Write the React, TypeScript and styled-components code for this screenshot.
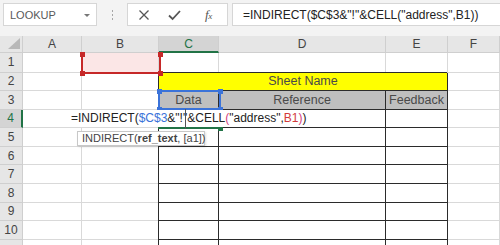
import React from "react";
import styled, { createGlobalStyle } from "styled-components";

const GREEN = "#217346";
const GRID = "#d9d9d9";
const TABLE = "#2b2b2b";

const GlobalStyle = createGlobalStyle`
  html, body { margin: 0; padding: 0; background: #fff; }
  body { font-family: "Liberation Sans", Arial, sans-serif; }
`;

const Window = styled.div`
  position: relative;
  width: 500px;
  height: 245px;
  overflow: hidden;
  background: #fff;
`;

const Toolbar = styled.div`
  display: flex;
  align-items: flex-start;
  height: 36px;
  box-sizing: border-box;
  padding: 3px 0 0 3px;
  background: #f3f3f3;
`;

const NameBox = styled.div`
  width: 94px;
  height: 23px;
  box-sizing: border-box;
  display: flex;
  align-items: center;
  justify-content: space-between;
  padding: 0 6px;
  background: #fff;
  border: 1px solid #d6d6d6;
  font-size: 11px;
  color: #595959;
`;

const Caret = styled.span`
  width: 0;
  height: 0;
  border-left: 3px solid transparent;
  border-right: 3px solid transparent;
  border-top: 3px solid #777;
  margin-top: 1px;
`;

const Grip = styled.div`
  width: 30px;
  height: 23px;
  display: flex;
  flex-direction: column;
  align-items: center;
  justify-content: center;
  gap: 2px;
  span {
    width: 1px;
    height: 2px;
    background: #a6a6a6;
  }
`;

const ButtonBox = styled.div`
  width: 101px;
  height: 23px;
  box-sizing: border-box;
  display: flex;
  align-items: center;
  padding-left: 10px;
  gap: 18px;
  background: #fff;
  border: 1px solid #d6d6d6;
`;

const Fx = styled.span`
  font-family: "Liberation Serif", "Times New Roman", serif;
  font-style: italic;
  font-size: 13px;
  color: #555;
  margin-left: 6px;
  letter-spacing: -0.5px;
  sub {
    font-size: 9px;
    vertical-align: baseline;
  }
`;

const FormulaBox = styled.div`
  flex: 1;
  height: 23px;
  box-sizing: border-box;
  margin-left: 4px;
  padding-left: 10px;
  display: flex;
  align-items: center;
  background: #fff;
  border: 1px solid #d6d6d6;
  border-right: none;
  font-size: 12px;
  color: #222;
  white-space: nowrap;
`;

const Sheet = styled.div`
  display: grid;
  grid-template-columns: 23px 59px 77px 60px 167px 62px 1fr;
  grid-template-rows: 17px 19.5px repeat(10, 18.6px);
  font-size: 12px;
`;

const Corner = styled.div`
  background: #e6e6e6;
  border-right: 1px solid #cfcfcf;
  border-bottom: 1px solid #cfcfcf;
  display: flex;
  align-items: flex-end;
  justify-content: flex-end;
  padding: 0 2px 3px 0;
`;

const ColHead = styled.div<{ $active?: boolean }>`
  display: flex;
  align-items: center;
  justify-content: center;
  background: ${({ $active }) => ($active ? "#d4d4d4" : "#e6e6e6")};
  color: ${({ $active }) => ($active ? GREEN : "#444")};
  border-right: 1px solid #cfcfcf;
  border-bottom: ${({ $active }) => ($active ? `2px solid ${GREEN}` : "1px solid #cfcfcf")};
`;

const RowHead = styled.div<{ $active?: boolean }>`
  display: flex;
  align-items: center;
  justify-content: center;
  background: ${({ $active }) => ($active ? "#d4d4d4" : "#e6e6e6")};
  color: ${({ $active }) => ($active ? GREEN : "#444")};
  border-bottom: 1px solid #cfcfcf;
  border-right: ${({ $active }) => ($active ? `2px solid ${GREEN}` : "1px solid #cfcfcf")};
`;

const Cell = styled.div<{ $fill?: string; $table?: boolean; $span?: number }>`
  grid-column: span ${({ $span }) => $span || 1};
  display: flex;
  align-items: center;
  justify-content: center;
  background: ${({ $fill }) => $fill || "#fff"};
  color: #4a4a4a;
  font-size: 12.5px;
  border-right: 1px solid ${({ $table }) => ($table ? TABLE : GRID)};
  border-bottom: 1px solid ${({ $table }) => ($table ? TABLE : GRID)};
  box-shadow: ${({ $table }) => ($table ? `-1px -1px 0 0 ${TABLE}` : "none")};
`;

const RefBox = styled.div<{ $color: string; $noTop?: boolean }>`
  position: absolute;
  box-sizing: border-box;
  border: 2px solid ${({ $color }) => $color};
  border-top-color: ${({ $color, $noTop }) => ($noTop ? "transparent" : $color)};
`;

const Handle = styled.span<{ $color: string; $right?: boolean; $bottom?: boolean }>`
  position: absolute;
  width: 5px;
  height: 5px;
  background: ${({ $color }) => $color};
  left: ${({ $right }) => ($right ? "auto" : "-3.5px")};
  right: ${({ $right }) => ($right ? "-3.5px" : "auto")};
  top: ${({ $bottom }) => ($bottom ? "auto" : "-3.5px")};
  bottom: ${({ $bottom }) => ($bottom ? "-3.5px" : "auto")};
`;

const EditBox = styled.div`
  position: absolute;
  left: 23px;
  top: 110px;
  width: 330px;
  height: 17px;
  box-sizing: border-box;
  padding-left: 48px;
  background: #fff;
  font-size: 12px;
  line-height: 17px;
  color: #222;
  white-space: nowrap;
`;

const TextCursor = styled.div`
  position: absolute;
  left: 185px;
  top: 109px;
  width: 1px;
  height: 20px;
  background: #555;
`;

const Tooltip = styled.div`
  position: absolute;
  left: 77px;
  top: 131px;
  width: 128px;
  height: 15px;
  box-sizing: border-box;
  padding-left: 4px;
  background: #fff;
  border: 1px solid #c8c8c8;
  box-shadow: 1px 1px 2px rgba(0, 0, 0, 0.12);
  font-size: 11px;
  line-height: 13px;
  color: #444;
  white-space: nowrap;
  b {
    font-weight: bold;
  }
`;

const Tok = styled.span<{ $c: string }>`
  color: ${({ $c }) => $c};
`;

const BLUE = "#3b73d9";
const PINK = "#d2407f";
const RED = "#d23a3a";
const REF_RED = "#c62828";

const Formula = () => (
  <>
    =INDIRECT(<Tok $c={BLUE}>$C$3</Tok>&amp;"!"&amp;CELL<Tok $c={PINK}>(</Tok>"address",
    <Tok $c={RED}>B1</Tok>
    <Tok $c={PINK}>)</Tok>)
  </>
);

const COLS = ["A", "B", "C", "D", "E", "F"];
const ROWS = [1, 2, 3, 4, 5, 6, 7, 8, 9, 10, 11];

const renderRow = (r: number) => {
  const cells: React.ReactNode[] = [];
  COLS.forEach((c, i) => {
    const key = `${c}${r}`;
    const inTable = i >= 2 && i <= 4 && r >= 2;
    if (r === 2 && (c === "D" || c === "E")) return;
    if (r === 2 && c === "C") {
      cells.push(
        <Cell key={key} $span={3} $fill="#ffff00" $table>
          Sheet Name
        </Cell>
      );
      return;
    }
    if (r === 3 && inTable) {
      const label = c === "C" ? "Data" : c === "D" ? "Reference" : "Feedback";
      cells.push(
        <Cell key={key} $fill="#bfbfbf" $table>
          {label}
        </Cell>
      );
      return;
    }
    if (r === 1 && c === "B") {
      cells.push(<Cell key={key} $fill="#fbe6e6" />);
      return;
    }
    cells.push(<Cell key={key} $table={inTable} />);
  });
  return cells;
};

export default function App() {
  return (
    <Window>
      <GlobalStyle />
      <Toolbar>
        <NameBox>
          LOOKUP
          <Caret />
        </NameBox>
        <Grip>
          <span />
          <span />
          <span />
        </Grip>
        <ButtonBox>
          <svg width="12" height="12" viewBox="0 0 12 12">
            <path d="M1.5 1.5 L10.5 10.5 M10.5 1.5 L1.5 10.5" stroke="#555" strokeWidth="1.3" />
          </svg>
          <svg width="13" height="12" viewBox="0 0 13 12">
            <path d="M1 6.5 L4.6 10 L12 2" stroke="#555" strokeWidth="1.8" fill="none" />
          </svg>
          <Fx>
            f<sub>x</sub>
          </Fx>
        </ButtonBox>
        <FormulaBox>
          =INDIRECT($C$3&amp;"!"&amp;CELL("address",B1))
        </FormulaBox>
      </Toolbar>
      <Sheet>
        <Corner>
          <svg width="12" height="11" viewBox="0 0 12 11">
            <path d="M12 0 L12 11 L0 11 Z" fill="#b8b8b8" />
          </svg>
        </Corner>
        {COLS.map((c) => (
          <ColHead key={c} $active={c === "C"}>
            {c}
          </ColHead>
        ))}
        {ROWS.map((r) => (
          <React.Fragment key={r}>
            {/* row 11 is cut by the window edge, its number is not visible */}
            <RowHead $active={r === 4}>{r < 11 ? r : ""}</RowHead>
            {renderRow(r)}
          </React.Fragment>
        ))}
      </Sheet>

      <RefBox $color={REF_RED} $noTop style={{ left: 81, top: 53, width: 80, height: 21 }}>
        <Handle $color={REF_RED} />
        <Handle $color={REF_RED} $right />
        <Handle $color={REF_RED} $bottom />
        <Handle $color={REF_RED} $right $bottom />
      </RefBox>
      <RefBox $color={GREEN} style={{ left: 158, top: 108, width: 63, height: 21 }}>
        <Handle $color={GREEN} $right $bottom />
      </RefBox>
      <RefBox $color={BLUE} style={{ left: 158, top: 90, width: 63, height: 20 }}>
        <Handle $color={BLUE} />
        <Handle $color={BLUE} $right />
        <Handle $color={BLUE} $bottom />
        <Handle $color={BLUE} $right $bottom />
      </RefBox>
      <EditBox>
        <Formula />
      </EditBox>
      <TextCursor />
      <Tooltip>
        INDIRECT(<b>ref_text</b>, [a1])
      </Tooltip>
    </Window>
  );
}
